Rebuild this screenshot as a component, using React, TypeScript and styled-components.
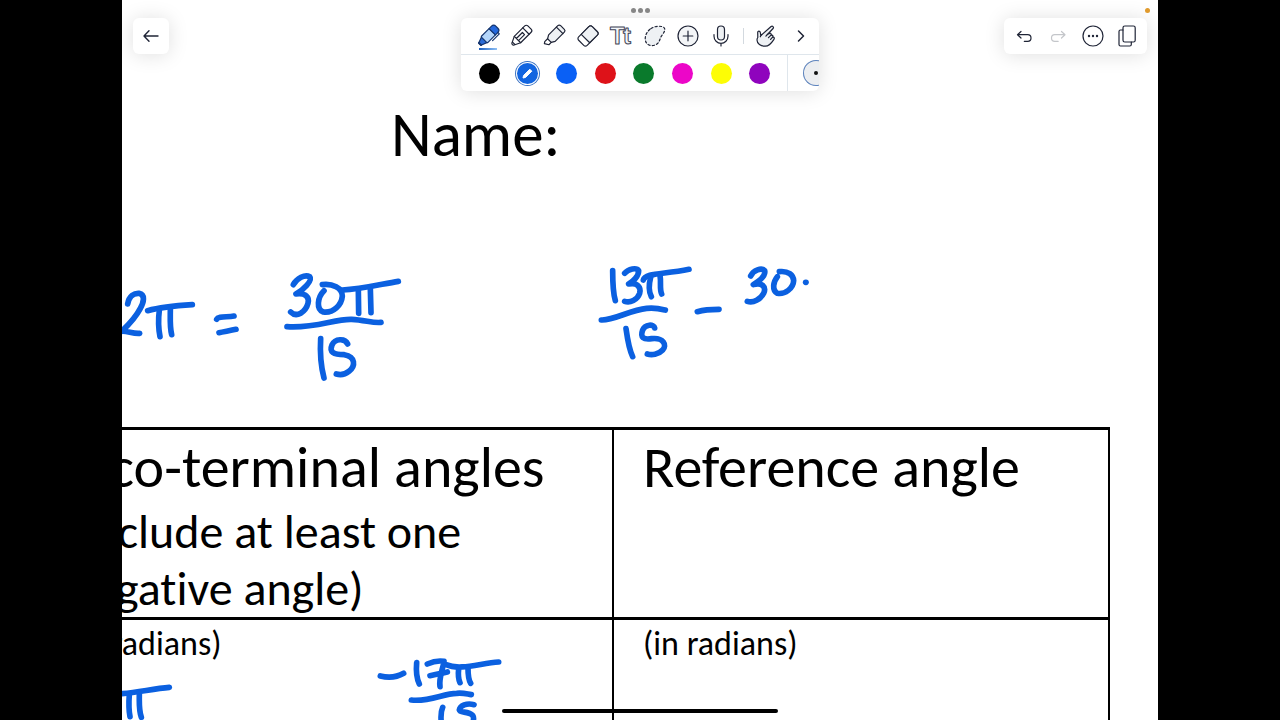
import React from "react";
import styled, { createGlobalStyle } from "styled-components";

const INK = "#0b60e0";
const LINE = "#1f2436";
const PAPER_FONT = 'Carlito, Calibri, Lato, "Open Sans", sans-serif';

const GlobalStyle = createGlobalStyle`
  * { box-sizing: border-box; }
  body {
    margin: 0;
    background: #000;
    color: #000;
    font-family: ${PAPER_FONT};
    font-variant-ligatures: none;
  }
  button { border: 0; padding: 0; background: none; font: inherit; cursor: pointer; }
`;

const Screen = styled.div`
  display: flex;
  height: 100vh;
  padding: 0 122px;
  background: #000;
`;

const Page = styled.main`
  position: relative;
  flex: 1;
  min-width: 0;
  overflow: hidden;
  background: #fff;
`;

const TopBar = styled.header`
  display: grid;
  grid-template-columns: 1fr auto 1fr;
  align-items: start;
  padding: 18px 11px 0;
`;

const Panel = styled.div`
  background: #fff;
  border-radius: 6px;
  box-shadow: 0 1px 20px rgba(0, 0, 0, 0.13);
`;

const BackPanel = styled(Panel)`
  display: flex;
  width: 36px;
  height: 36px;
`;

const ActionPanel = styled(Panel)`
  display: flex;
  justify-self: end;
  width: 143px;
  height: 36px;
  padding: 0 3px;
`;

const Palette = styled(Panel)`
  width: 358px;
  overflow: hidden;
`;

const ToolRow = styled.div`
  display: flex;
  height: 37px;
  padding-left: 10px;
  border-bottom: 1px solid #dfe6ec;
`;

const ColorRow = styled.div`
  display: flex;
  align-items: center;
  height: 36px;
  padding-left: 9px;
`;

const ToolGroup = styled.div`
  display: flex;
  width: 267px;
`;

const SwatchGroup = styled.div`
  display: flex;
  flex: none;
  width: 309px;
`;

const IconButton = styled.button<{ $width?: number; $active?: boolean }>`
  position: relative;
  display: flex;
  align-items: center;
  justify-content: center;
  flex: ${(p) => (p.$width ? `0 0 ${p.$width}px` : "1 1 0")};
  min-width: 0;
  height: 36px;
  color: ${LINE};

  &:disabled { color: #c4c6ca; }

  &::after {
    content: "";
    display: ${(p) => (p.$active ? "block" : "none")};
    position: absolute;
    left: 50%;
    bottom: 4px;
    width: 18px;
    height: 2px;
    margin-left: -9px;
    background: linear-gradient(90deg, #1c5fc0, #8fc0f5);
  }

  svg { flex: none; overflow: visible; }
`;

const ToolDivider = styled.span`
  width: 1px;
  height: 16px;
  margin: 10px 5px;
  background: #d3d9df;
`;

const ColorDivider = styled.span`
  flex: none;
  width: 1px;
  height: 36px;
  margin: 0 15px 0 8px;
  background: #dfe6ec;
`;

const Swatch = styled.button<{ $color: string; $selected?: boolean }>`
  display: flex;
  align-items: center;
  justify-content: center;
  flex: 1 1 0;
  height: 36px;

  span {
    display: flex;
    align-items: center;
    justify-content: center;
    width: 21px;
    height: 21px;
    border-radius: 50%;
    background: ${(p) => p.$color};
    box-shadow: ${(p) => (p.$selected ? "0 0 0 1px #fff, 0 0 0 2px #3c74c4" : "none")};
  }
`;

const SizeButton = styled.button`
  display: flex;
  align-items: center;
  justify-content: center;
  flex: none;
  width: 26px;
  height: 26px;
  border-radius: 50%;
  background: #eceef1;
  box-shadow: inset 0 0 0 1px #5d83bd;

  span {
    width: 4px;
    height: 4px;
    border-radius: 50%;
    background: #111;
  }
`;

const WindowDots = styled.div`
  position: absolute;
  top: 8px;
  left: 0;
  right: 0;
  display: flex;
  justify-content: center;
  gap: 2px;

  span {
    width: 5px;
    height: 5px;
    border-radius: 50%;
    background: #868686;
  }
`;

const RecordingDot = styled.span`
  position: absolute;
  top: 8px;
  right: 8px;
  width: 5px;
  height: 5px;
  border-radius: 50%;
  background: #e09a2c;
`;

const HomeIndicator = styled.span`
  position: absolute;
  bottom: 7px;
  left: 50%;
  width: 276px;
  height: 4px;
  margin-left: -138px;
  border-radius: 2px;
  background: #000;
`;

const Title = styled.h1`
  margin: 8px 0 0;
  padding-left: 269px;
  font-size: 63px;
  line-height: 72px;
  font-weight: 400;
`;

/* The worksheet is scrolled sideways, so its first column starts off the page. */
const Sheet = styled.table`
  width: calc(100% + 36px);
  margin: 256px 0 0 -84px;
  border-spacing: 0;
  border-top: 3px solid #000;
  table-layout: fixed;
`;

const AnglesColumn = styled.col`
  width: 576px;
`;

const Cell = styled.td<{ $tall?: boolean }>`
  height: ${(p) => (p.$tall ? "190px" : "140px")};
  padding: 3px 0 0 29px;
  border-right: 2px solid #000;
  border-bottom: 3px solid #000;
  vertical-align: top;
  text-align: left;
  font-weight: 400;
  white-space: nowrap;
`;

const HeadLine = styled.div`
  font-size: 58px;
  line-height: 70px;
`;

const SubLine = styled.div`
  font-size: 48px;
  line-height: 57px;
`;

const SmallLine = styled.div`
  font-size: 34px;
  line-height: 42px;
`;

const InkLayer = styled.svg`
  position: absolute;
  top: 0;
  left: 0;
  width: 1036px;
  height: 720px;
  pointer-events: none;
`;

const stroke = {
  fill: "none",
  stroke: "currentColor",
  strokeWidth: 1.2,
  strokeLinecap: "round" as const,
  strokeLinejoin: "round" as const,
};

const Icon = ({ children }: { children: React.ReactNode }) => (
  <svg width="24" height="24" viewBox="0 0 24 24" aria-hidden="true" {...stroke}>
    {children}
  </svg>
);

const PenIcon = () => (
  <Icon>
    <g transform="rotate(45 12 12)" stroke="#15356f">
      <path d="M8 17l2.4 6.500h3.200l2.400-6.500z" fill="#2b6bd6" />
      <path d="M7.500 6h9v10.500a1 1 0 0 1-1 1h-7a1 1 0 0 1-1-1z" fill="#b4d6fb" />
      <path d="M7.500 6V2.500a3 3 0 0 1 3-3h3a3 3 0 0 1 3 3V6z" fill="#2468dc" />
      <path d="M16.500 2.500h2V12" />
      <path d="M10.500 23.300h3" strokeWidth="2" />
    </g>
  </Icon>
);

const PencilIcon = () => (
  <Icon>
    <g transform="rotate(45 12 12)">
      <path d="M7.500 17V2.200A2.200 2.200 0 0 1 9.700 0h4.600a2.200 2.200 0 0 1 2.200 2.200V17l-3 6.200a1.600 1.600 0 0 1-3 0z" fill="#fff" />
      <path d="M7.500 5h9M7.500 17h9M10.500 8.500v8.500M13.500 8.500v8.500M10.500 8.500h3M10.300 22.300h3.400" />
    </g>
  </Icon>
);

const MarkerIcon = () => (
  <Icon>
    <g transform="rotate(45 12 12)">
      <path d="M7.400 15V2a2 2 0 0 1 2-2h5.200a2 2 0 0 1 2 2v13l-2 3.500H9.400z" fill="#eef1f4" />
      <path d="M7.400 4h9.200M9.400 18.500v4l1.200 1.700 4-2.400v-3.300" />
    </g>
  </Icon>
);

const EraserIcon = () => (
  <Icon>
    <g transform="rotate(45 12 12)">
      <rect x="6" y="2.400" width="12" height="19.200" rx="2.400" fill="#fff" />
      <path d="M6 15.600V4.800a2.400 2.400 0 0 1 2.400-2.400h7.200A2.400 2.400 0 0 1 18 4.800v10.800z" fill="#eef1f4" />
    </g>
  </Icon>
);

const TextIcon = () => (
  <Icon>
    <g fontFamily="Liberation Sans, sans-serif" fontWeight="700" fontSize="24" fill="#f4f6f8" stroke="#3f4557" strokeWidth="1">
      <text x="1" y="20">T</text>
      <text x="14" y="20">t</text>
    </g>
  </Icon>
);

const LassoIcon = () => (
  <Icon>
    <path
      d="M8 4.500C12 1.800 18.500 1.500 21 3.600c2.300 2.400-.6 5.600-2.400 8.200-1.800 2.700-1.500 5.200-4.300 7.900-3 2.600-8.500 2.600-10.800-.7C1 15.600 2 8.500 8 4.500z"
      fill="#eef1f4"
      strokeDasharray="2.200 2.200"
    />
  </Icon>
);

const AddIcon = () => (
  <Icon>
    <circle cx="12" cy="12" r="10" fill="#f3f5f7" />
    <path d="M12 7.200v9.600M7.200 12h9.600" />
  </Icon>
);

const MicIcon = () => (
  <Icon>
    <rect x="8.500" y="2" width="7" height="14" rx="3.500" fill="#eef1f4" />
    <path d="M5 10.500v1.800a7 7 0 0 0 14 0v-1.800M12 19.300V22" />
  </Icon>
);

const HandIcon = () => (
  <Icon>
    <path
      d="M3.800 13.500 3.700 8.300c.1-1.500 2.200-1.600 2.500-.1l.7 3.300 10.200-9c1.300-1.100 3.100.6 2 2L13.400 10.500l2.100-1.100c1.300-.6 2.300.9 1.300 1.900l.7-.2c1.300-.3 2 1.200 1.100 2.100l.4-.1c1.200-.1 1.700 1.300.9 2.200-1.900 2.800-3.700 6.500-8.600 6.900-4.600.3-8.300-2.800-8.300-6.200 0-1.100.2-1.700.8-2.500z"
      fill="#eef1f4"
    />
    <path d="M13.400 10.500l-1.500 1.600M16.800 11.300l-2.300 2.400M18.600 13.200l-2 2.200M6.900 11.500l-.6 1.300" />
  </Icon>
);

const ChevronIcon = () => (
  <Icon>
    <path d="M9.500 7l5 5-5 5" strokeWidth="1.500" />
  </Icon>
);

const BackIcon = () => (
  <Icon>
    <path d="M19 12H5.500M10 6.800L5 12l5 5.200" strokeWidth="1.400" />
  </Icon>
);

const UndoIcon = () => (
  <Icon>
    <path d="M9 7.500L5.500 10.700 9 14M5.800 10.700h9.900a3.300 3.300 0 0 1 0 6.600h-3.400" />
  </Icon>
);

const RedoIcon = () => (
  <Icon>
    <path d="M15.500 7.500l3.500 3.200-3.500 3.300M18.700 10.700H8.800a3.300 3.300 0 0 0 0 6.600h3.400" />
  </Icon>
);

const MoreIcon = () => (
  <Icon>
    <circle cx="12" cy="12" r="10" />
    <g fill="currentColor" stroke="none">
      <circle cx="8" cy="12" r="1.200" />
      <circle cx="12" cy="12" r="1.200" />
      <circle cx="16" cy="12" r="1.200" />
    </g>
  </Icon>
);

const PagesIcon = () => (
  <Icon>
    <path d="M8 6H5.500A1.500 1.500 0 0 0 4 7.500v13A1.500 1.500 0 0 0 5.500 22h9.300a1.500 1.500 0 0 0 1.500-1.500V18" />
    <rect x="8" y="2" width="12.200" height="16" rx="1.800" />
  </Icon>
);

const tools = [
  { label: "Pen", icon: <PenIcon />, active: true },
  { label: "Pencil", icon: <PencilIcon /> },
  { label: "Highlighter", icon: <MarkerIcon /> },
  { label: "Eraser", icon: <EraserIcon /> },
  { label: "Text", icon: <TextIcon /> },
  { label: "Lasso", icon: <LassoIcon /> },
  { label: "Add", icon: <AddIcon /> },
  { label: "Record", icon: <MicIcon /> },
];

const swatches = [
  { label: "Black", color: "#000000" },
  { label: "Ink blue", color: "#1265e0", selected: true },
  { label: "Blue", color: "#0a60f5" },
  { label: "Red", color: "#de1219" },
  { label: "Green", color: "#0a7a2c" },
  { label: "Magenta", color: "#ec06c8" },
  { label: "Yellow", color: "#fdfd05" },
  { label: "Purple", color: "#8f04bd" },
];

// Pen strokes, grouped by the expression they belong to; units are a third of a pixel.
const inkGroups = [
  {
    name: "two pi equals thirty pi over fifteen",
    at: "translate(115 260) scale(0.33333)",
    strokes: [
      "M38 132C42 108 58 99 72 100C92 104 86 127 76 145C62 172 40 195 20 214C35 212 55 222 74 220",
      "M98 152C120 146 170 138 232 134",
      "M133 150C130 175 130 205 135 230",
      "M166 148C166 175 164 200 170 224",
      "M305 178C310 168 335 172 357 168",
      "M312 218C325 215 345 212 363 208",
      "M535 74C545 55 570 42 584 50C594 62 564 90 543 102C572 98 584 112 579 130C572 156 545 174 527 156",
      "M627 92C607 112 603 148 625 156C655 160 680 135 682 108C682 84 652 70 622 74",
      "M682 90C740 88 800 72 850 64",
      "M730 90L731 160",
      "M766 86L768 158",
      "M516 200C600 206 660 176 710 178C750 180 775 190 798 187",
      "M617 236C615 270 618 320 627 354",
      "M698 252C690 234 660 235 651 255C642 276 655 284 688 284C722 290 722 318 702 334C692 342 677 346 664 342",
    ],
  },
  {
    name: "thirteen pi over fifteen minus thirty",
    at: "translate(580 250) scale(0.33333)",
    strokes: [
      "M98 62C98 90 98 125 106 152",
      "M134 70C145 56 170 52 176 62C176 78 160 94 146 102C172 96 184 112 179 130C172 150 150 160 134 154",
      "M190 90C196 68 250 74 327 58",
      "M212 82C206 105 206 125 214 140",
      "M240 76C244 100 238 115 245 132",
      "M64 210C100 212 150 180 200 175C225 172 240 176 256 180",
      "M138 236C142 265 148 300 158 320",
      "M224 234C222 222 195 222 188 240C180 262 190 270 215 266C250 262 262 285 248 300C235 314 215 316 202 312",
      "M352 185C370 180 395 178 417 178",
      "M512 78C520 60 545 52 554 62C558 78 535 95 520 104C545 96 560 110 551 130C542 148 520 160 502 154",
      "M592 80C580 95 575 120 592 130C615 134 640 115 641 92C640 75 625 62 598 65",
      "M677 97L678 97",
    ],
  },
  {
    name: "negative seventeen pi over fifteen",
    at: "translate(110 610) scale(0.33333)",
    strokes: [
      "M26 252C80 248 130 236 178 232",
      "M58 252C56 280 56 300 60 320",
      "M88 250C88 275 86 300 94 322",
      "M811 198C835 204 860 202 881 190",
      "M920 158C918 180 920 205 928 222",
      "M952 162C970 154 990 152 1002 154C998 180 986 205 990 230",
      "M960 197C975 194 995 190 1012 186",
      "M1008 164C1050 182 1110 160 1166 156",
      "M1046 176C1044 195 1046 210 1050 218",
      "M1074 174C1074 195 1076 210 1082 220",
      "M904 270C960 276 1000 250 1040 250C1060 248 1070 252 1084 254",
      "M998 292C992 305 992 320 994 340",
      "M1092 284C1070 278 1050 287 1048 300C1050 310 1075 302 1088 316C1094 325 1090 335 1085 345",
    ],
  },
];

export default function App() {
  return (
    <>
      <GlobalStyle />
      <Screen>
        <Page>
          <TopBar>
            <BackPanel>
              <IconButton aria-label="Back"><BackIcon /></IconButton>
            </BackPanel>
            <Palette role="toolbar" aria-label="Drawing tools">
              <ToolRow>
                <ToolGroup>
                  {tools.map((t) => (
                    <IconButton key={t.label} aria-label={t.label} $active={t.active}>
                      {t.icon}
                    </IconButton>
                  ))}
                </ToolGroup>
                <ToolDivider />
                <IconButton aria-label="Gestures" $width={34}><HandIcon /></IconButton>
                <IconButton aria-label="More tools" $width={36}><ChevronIcon /></IconButton>
              </ToolRow>
              <ColorRow>
                <SwatchGroup>
                  {swatches.map((s) => (
                    <Swatch key={s.label} aria-label={s.label} $color={s.color} $selected={s.selected}>
                      <span>
                        {s.selected && (
                          <svg width="13" height="13" viewBox="0 0 13 13" aria-hidden="true">
                            <path d="M2 11l.6-2.600L8.800 2.200l2 2L4.600 10.400z" fill="#fff" stroke="#fff" strokeLinejoin="round" />
                          </svg>
                        )}
                      </span>
                    </Swatch>
                  ))}
                </SwatchGroup>
                <ColorDivider />
                <SizeButton aria-label="Stroke size"><span /></SizeButton>
              </ColorRow>
            </Palette>
            <ActionPanel>
              <IconButton aria-label="Undo"><UndoIcon /></IconButton>
              <IconButton aria-label="Redo" disabled><RedoIcon /></IconButton>
              <IconButton aria-label="More"><MoreIcon /></IconButton>
              <IconButton aria-label="Pages"><PagesIcon /></IconButton>
            </ActionPanel>
          </TopBar>

          <Title>Name:</Title>

          <Sheet>
            <colgroup>
              <AnglesColumn />
              <col />
            </colgroup>
            <tbody>
              <tr>
                <Cell as="th" scope="col" $tall>
                  <HeadLine>2 co-terminal angles</HeadLine>
                  <SubLine>(include at least one</SubLine>
                  <SubLine>negative angle)</SubLine>
                </Cell>
                <Cell as="th" scope="col" $tall>
                  <HeadLine>Reference angle</HeadLine>
                </Cell>
              </tr>
              <tr>
                <Cell><SmallLine>(in radians)</SmallLine></Cell>
                <Cell><SmallLine>(in radians)</SmallLine></Cell>
              </tr>
            </tbody>
          </Sheet>

          <InkLayer viewBox="122 0 1036 720" role="img" aria-label="Handwritten working">
            {inkGroups.map((g) => (
              <g
                key={g.name}
                transform={g.at}
                fill="none"
                stroke={INK}
                strokeWidth="17"
                strokeLinecap="round"
                strokeLinejoin="round"
              >
                {g.strokes.map((d) => <path key={d} d={d} />)}
              </g>
            ))}
          </InkLayer>

          <WindowDots><span /><span /><span /></WindowDots>
          <RecordingDot />
          <HomeIndicator />
        </Page>
      </Screen>
    </>
  );
}
